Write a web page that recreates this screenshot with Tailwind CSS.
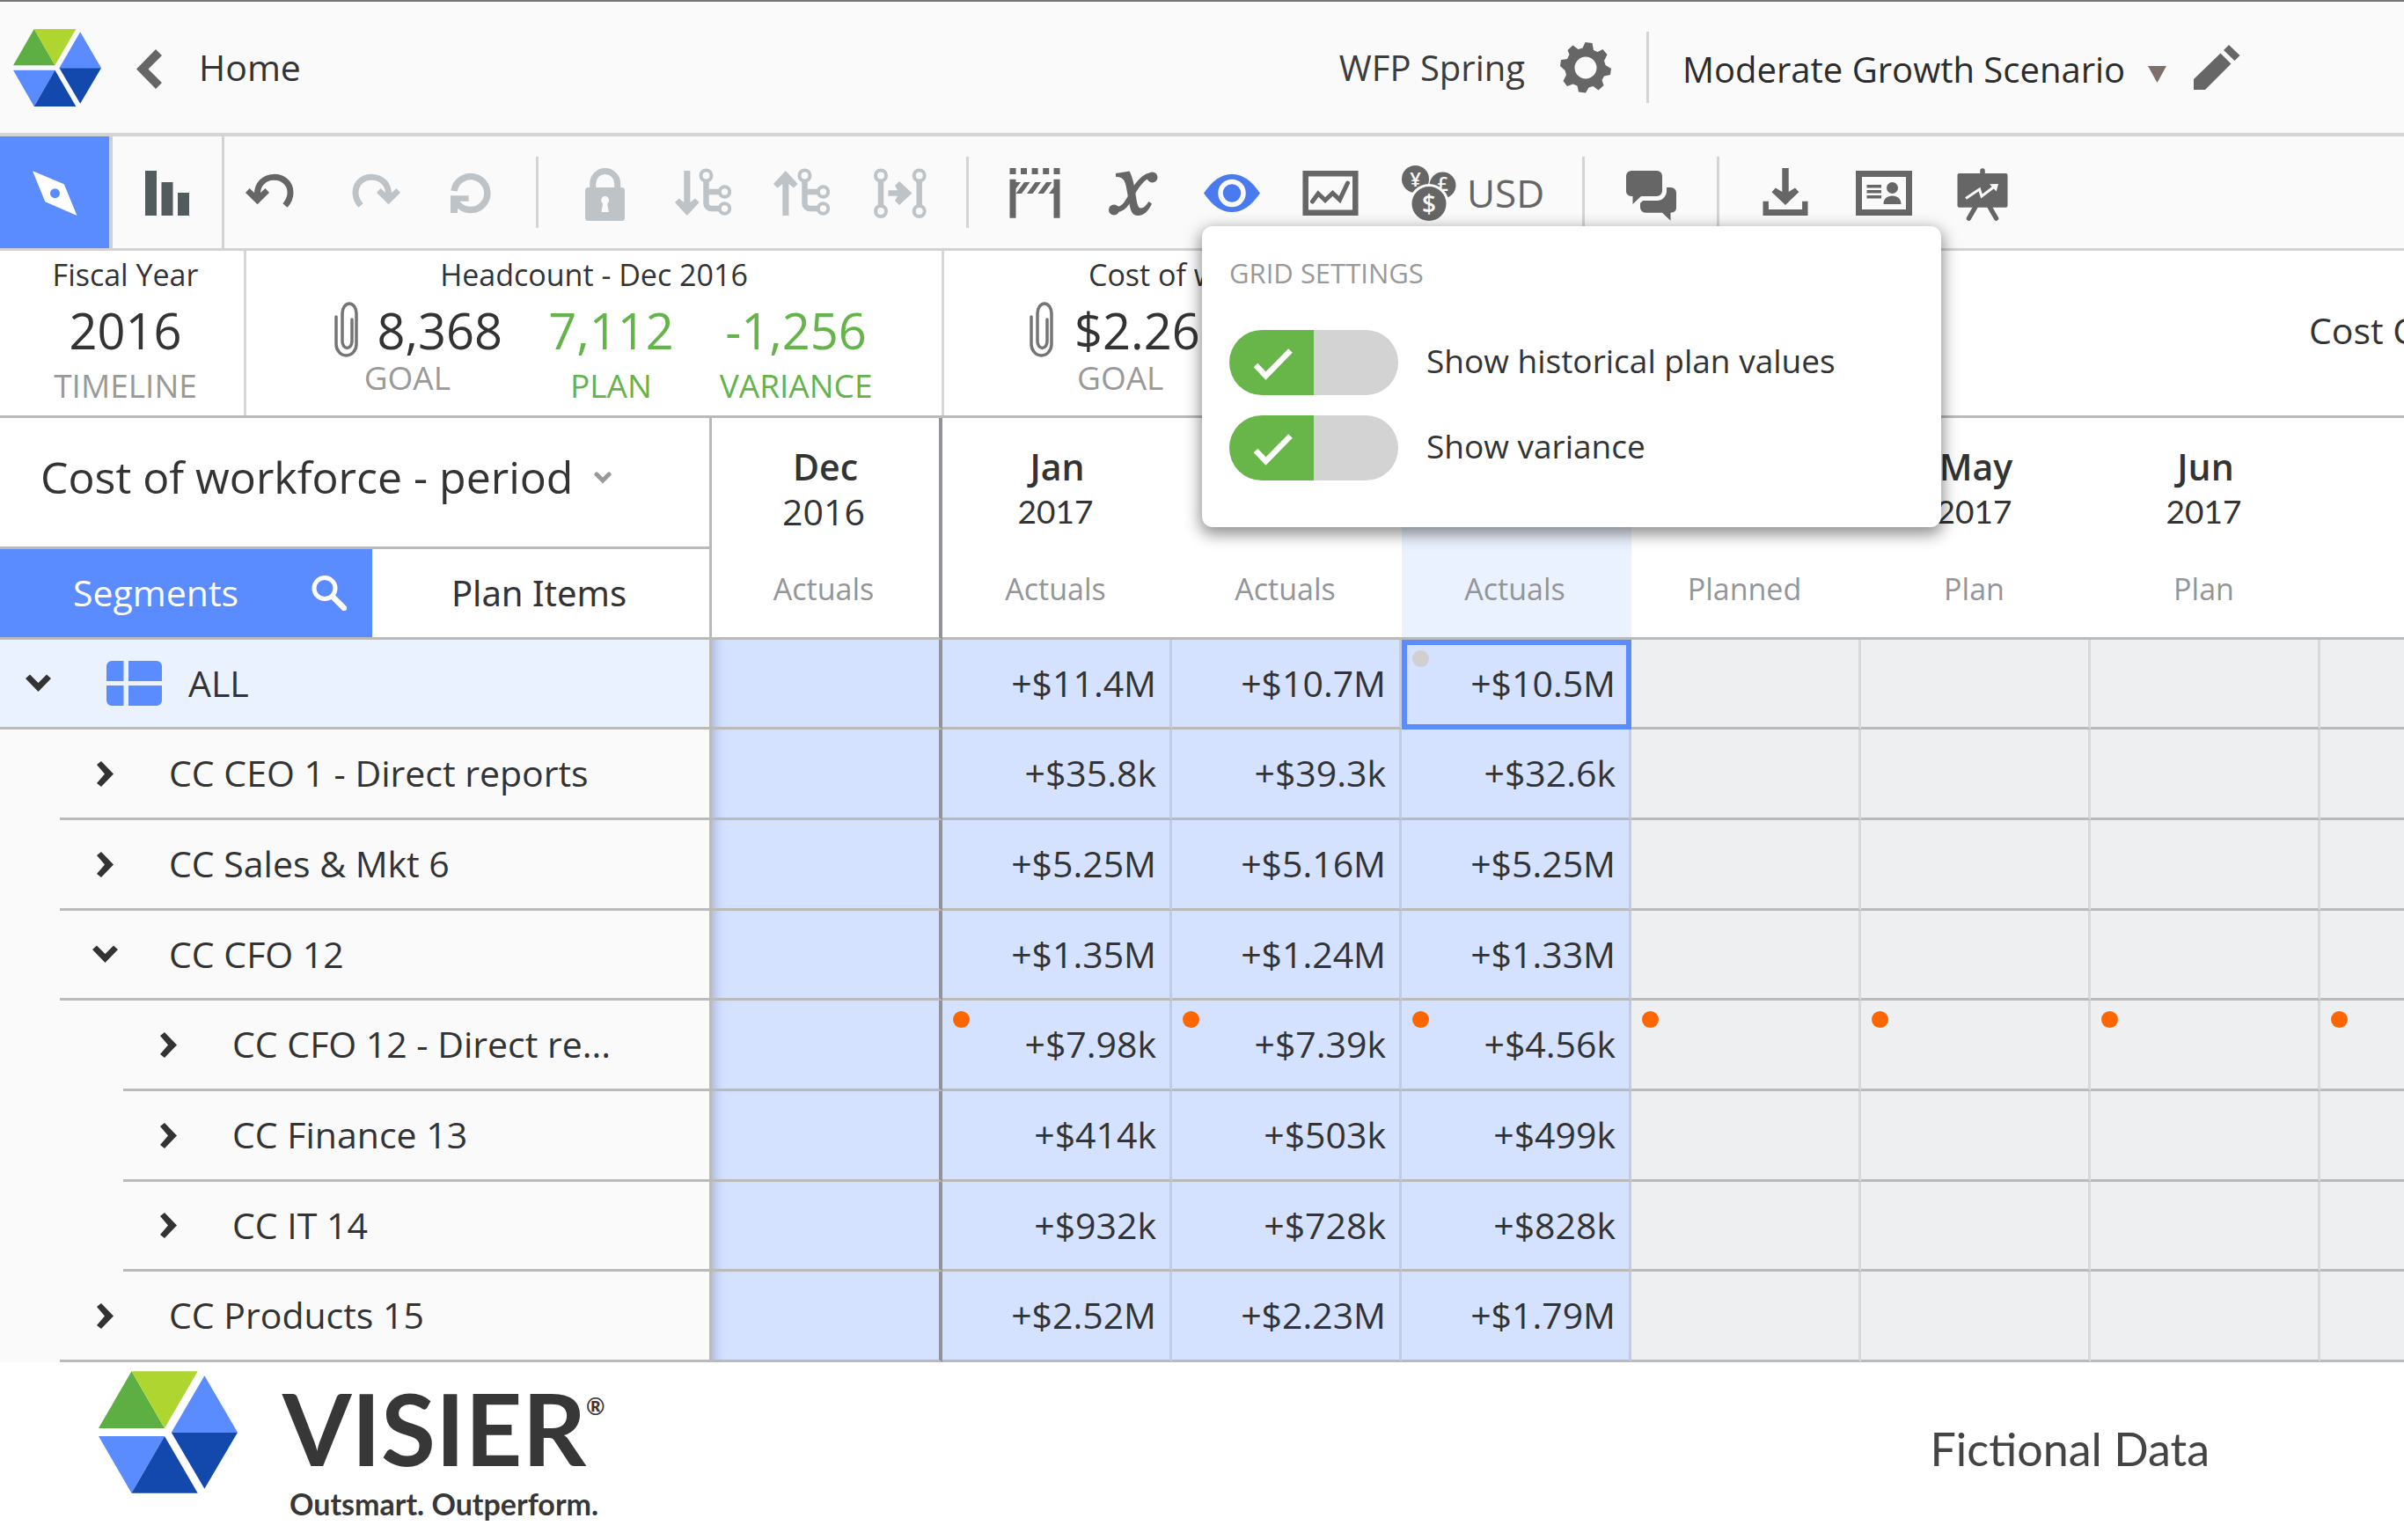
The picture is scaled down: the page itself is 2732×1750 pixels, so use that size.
<!DOCTYPE html>
<html lang="en">
<head>
<meta charset="utf-8">
<title>Moderate Growth Scenario</title>
<script src="https://cdn.jsdelivr.net/npm/@tailwindcss/browser@4"></script>
</head>
<body class="bg-white font-['Open_Sans',sans-serif] text-[41px] text-[#333] overflow-x-hidden">
<svg class="hidden">
  <symbol id="logo" viewBox="0 0 158.4 139">
    <path fill="#5dae43" d="M37.6 0L75.2 65H0z"/><path fill="#afd630" d="M37.6 0H113L75.2 65z"/>
    <path fill="#5b8cff" d="M120.7 5l37.7 64.7H83z"/><path fill="#1348ad" d="M83 69.7h75.4L120.7 134z"/>
    <path fill="#5b8cff" d="M0 74h75.2L37.6 139z"/><path fill="#1348ad" d="M75.2 74L113 139H37.6z"/>
  </symbol>
  <symbol id="right" viewBox="0 0 29 29"><path fill="#333" d="M5 4L10 0 24 14.5 10 29 5 25 14 14.5z"/></symbol>
  <symbol id="down" viewBox="0 0 29 29"><path fill="#333" d="M0 9L5 4.500 14.500 14 24 4.500 29 9 14.500 24z"/></symbol>
  <symbol id="clip" viewBox="0 0 30 64"><path fill="none" stroke="#757575" stroke-width="3.500" stroke-linecap="round" d="M3 17V48a11.500 13 0 0 0 23 0V13a8 11 0 0 0-16 0V45a5.500 7.500 0 0 0 11 0V20"/></symbol>
  <symbol id="tree" viewBox="0 0 64 64"><path fill="none" stroke="currentColor" stroke-width="6.500" d="M35.500 18V44a6 6 0 0 0 6 6H50M35.500 31H50"/><g fill="#fafafa" stroke="currentColor" stroke-width="4"><circle cx="35.500" cy="12.500" r="6"/><circle cx="56.500" cy="31" r="5.700"/><circle cx="56.500" cy="50" r="5.700"/></g></symbol>
</svg>

<header class="flex items-center h-[155px] bg-[#fafafa] border-t-2 border-t-[#777] border-b-4 border-b-[#d4d4d4] pl-[15px] pr-[186px]">
  <a href="#" aria-label="Visier"><svg class="w-[100px] h-[88px]"><use href="#logo"/></svg></a>
  <a href="#" class="flex items-center gap-[42px] ml-10">
    <svg class="w-[29px] h-[45px] mt-1" viewBox="0 0 29 45"><path fill="#666" d="M22 0l7 7-15.500 15.500L29 38l-7 7L0 22.500z"/></svg>
    <span>Home</span>
  </a>
  <div class="flex items-center ml-auto text-[40px]">
    <span class="text-[#3c3c3c]">WFP Spring</span>
    <button aria-label="Settings" class="ml-10"><svg class="w-[58px] h-[58px] block" viewBox="0 0 58 58"><path fill="#666" fill-rule="evenodd" d="M28.500 0l8 1 1.500 8 4.500 2 6-3 5 6-3.500 7 1.500 5 6.500 4-1 7-7 1.500-2.500 4.500 2 6-6 5.500-6-4.500-5 1.500-3.500 6-8-1-1.500-7-5-2-6.500 2.500-4.500-6L7 37l-1.500-5L0 27l1-7 7-1 2.500-5-2-5 6-5.500 6 4.500 5-1.500zM29 16.500a12.500 12.500 0 1 0 0 25 12.500 12.500 0 0 0 0-25z"/></svg></button>
    <div class="w-[3px] h-[81px] bg-[#d4d4d4] ml-10 mr-[38px]"></div>
    <select aria-label="Scenario" class="appearance-none mt-1 text-[#2c2c2c]"><option>Moderate Growth Scenario</option></select>
    <svg class="w-[21px] h-[19px] ml-[25px] mt-4" viewBox="0 0 21 19"><path fill="#7d706c" d="M0 0h21L10.500 19z"/></svg>
    <button aria-label="Edit scenario" class="ml-[31px]"><svg class="w-[53px] h-[51px] block" viewBox="0 0 53 51"><path fill="#666" d="M0 39L30.500 9.500 42.500 21.500 13 51H0zM34 6l6-6L52.500 12l-6 6z"/></svg></button>
  </div>
</header>

<nav class="flex items-center h-[130px] bg-[#fafafa] border-b-3 border-[#d2d2d2] text-[#666] [&_svg]:size-16 [&_svg]:shrink-0 [&_button]:h-[127px] [&_button]:flex [&_button]:items-center [&_button]:shrink-0">
  <button aria-label="Explore" class="w-32 justify-center bg-[#5b8cff] border-r-4 border-[#c9cfdf]"><svg viewBox="0 0 64 64"><path fill="#fff" fill-rule="evenodd" d="M7 7.300L42.800 22.300 57.500 58 21.300 42.300zM32.500 27.200a5.500 5.500 0 1 0 0 11 5.500 5.500 0 0 0 0-11z"/></svg></button>
  <button aria-label="Charts" class="w-[127px] justify-center border-r-3 border-[#d2d2d2]"><svg viewBox="0 0 64 64"><path fill="#525b5e" d="M7 7h13v51H7zM25.500 20h13v38h-13zM44 32h13v26H44z"/></svg></button>
  <button aria-label="Undo" class="w-28 justify-center"><svg viewBox="0 0 64 64"><path fill="none" stroke="#666" stroke-width="7" d="M13.500 35C12 8 51 8 51 32c0 6-2 10-6 14.500"/><path fill="#666" d="M0 32l4.500-5 5.500 5h7l5.500-5 4.500 5-13.500 13.300z"/></svg></button>
  <button aria-label="Redo" class="w-28 justify-center"><svg viewBox="0 0 64 64"><g transform="translate(64) scale(-1 1)"><path fill="none" stroke="#bdc3c7" stroke-width="7" d="M13.500 35C12 8 51 8 51 32c0 6-2 10-6 14.500"/><path fill="#bdc3c7" d="M0 32l4.500-5 5.500 5h7l5.500-5 4.500 5-13.500 13.300z"/></g></svg></button>
  <button aria-label="Reset" class="w-28 justify-center"><svg viewBox="0 0 64 64"><path fill="none" stroke="#bdc3c7" stroke-width="7.500" d="M13 30A19 19 0 1 1 17 44.500"/><path fill="#bdc3c7" d="M9 35.300h20.600v6.400H20l-3 5V55H9z"/></svg></button>
  <div class="w-[3px] h-[81px] bg-[#d4d4d4] ml-[18px] mr-[19px]"></div>
  <button aria-label="Lock" class="w-28 justify-center"><svg viewBox="0 0 64 64"><rect x="10" y="26" width="45" height="38" rx="3.500" fill="#bdc3c7"/><path fill="none" stroke="#bdc3c7" stroke-width="7" d="M18.700 28V21.500a14 14 0 0 1 28 0V28"/><path fill="#fafafa" d="M32.600 36a4.500 4.500 0 0 1 2.500 8.200l1.700 9.800h-8.400l1.700-9.800a4.500 4.500 0 0 1 2.500-8.200z"/></svg></button>
  <button aria-label="Push down" class="w-28 justify-center text-[#bdc3c7]"><svg viewBox="0 0 64 64"><use href="#tree"/><path fill="currentColor" d="M10.300 7h7.100v36l5.600-4.500 4.600 4.500L13.800 58 0 43l4.500-4.500 5.800 4.500z"/></svg></button>
  <button aria-label="Roll up" class="w-28 justify-center text-[#bdc3c7]"><svg viewBox="0 0 64 64"><use href="#tree"/><path fill="currentColor" d="M10.300 58h7.100V22l5.600 4.500 4.600-4.500L13.800 7 0 22l4.500 4.500 5.800-4.500z"/></svg></button>
  <button aria-label="Copy across" class="w-28 justify-center"><svg viewBox="0 0 64 64"><path stroke="#bdc3c7" stroke-width="6.500" d="M10 18v30M53.700 18v30"/><g fill="#fafafa" stroke="#bdc3c7" stroke-width="4"><circle cx="10" cy="12.500" r="6"/><circle cx="10" cy="53" r="6"/><circle cx="53.700" cy="12.500" r="6"/><circle cx="53.700" cy="53" r="6"/></g><path fill="#bdc3c7" d="M31 19l14.500 13.400L31 46l-5-5 3-5.300H18.400v-6.400H29L26 24z"/></svg></button>
  <div class="w-[3px] h-[81px] bg-[#d4d4d4] ml-[19px] mr-[19px]"></div>
  <button aria-label="Constraints" class="w-28 justify-center"><svg viewBox="0 0 64 64"><path fill="#666" d="M3.500 4h7v7h-7zM16 4h7v7h-7zM28.600 4h7v7h-7zM41.200 4h7v7h-7zM53.500 4h7v7h-7zM3.500 16.700h7v44h-7zM53.500 16.700h7v44h-7zM10 20h6l-6 8zM10.500 33L20 20h6.500L17 33zM23 33l9.500-13H39L29.500 33zM35.500 33L45 20h6.500L42 33zM48 33l6-8v8z"/></svg></button>
  <button aria-label="Formula" class="w-28 justify-center"><svg viewBox="0 0 64 64"><path fill="#666" d="M12 10l15.500-2.500c3.500 6.500 5.500 15 7 26 1.500 10 2.500 16 6 16 3.500 0 6-3 9-7.500l3.500 2.500C48.500 53.500 44 58 37 58c-6 0-8-5-9.500-13l-2.800-15C23 20 22 14 12 14z"/><path fill="none" stroke="#666" stroke-width="6" d="M55 13c-9-3-17 8-22 16-6 10-10 23-22 22"/><circle cx="53.500" cy="14.500" r="6" fill="#666"/><circle cx="10" cy="51.500" r="6" fill="#666"/></svg></button>
  <div class="relative">
    <button aria-label="Grid settings" aria-expanded="true" class="w-28 justify-center"><svg viewBox="0 0 64 64"><path fill="#4a7bee" d="M0 32.500C10 18 20 11 32 11s22 7 32 21.500C54 47 44 54 32 54S10 47 0 32.500z"/><circle cx="32" cy="32.500" r="13" fill="none" stroke="#fafafa" stroke-width="5.500"/></svg></button>
    <section class="absolute z-10 left-[22px] top-[102px] w-[840px] bg-white rounded-xl shadow-[0_6px_18px_2px_rgba(0,0,0,0.45)] pl-[31px] pt-[33px] pb-[53px] text-[37px] text-[#333]">
      <h2 class="text-[31px] leading-10 text-[#999]">GRID SETTINGS</h2>
      <label class="flex items-center gap-8 mt-[45px]">
        <span class="relative block w-[192px] h-[74px]"><input type="checkbox" checked class="appearance-none block w-full h-full rounded-full bg-[#d3d3d3] checked:bg-linear-to-r checked:from-[#68b64a] checked:from-50% checked:to-[#d3d3d3] checked:to-50%"><svg class="absolute left-4 top-[5px] pointer-events-none" viewBox="0 0 64 64"><path fill="none" stroke="#fff" stroke-width="6.500" d="M14 35l11.500 12L53.500 18.500"/></svg></span>
        <span class="pb-1">Show historical plan values</span>
      </label>
      <label class="flex items-center gap-8 mt-[23px]">
        <span class="relative block w-[192px] h-[74px]"><input type="checkbox" checked class="appearance-none block w-full h-full rounded-full bg-[#d3d3d3] checked:bg-linear-to-r checked:from-[#68b64a] checked:from-50% checked:to-[#d3d3d3] checked:to-50%"><svg class="absolute left-4 top-[5px] pointer-events-none" viewBox="0 0 64 64"><path fill="none" stroke="#fff" stroke-width="6.500" d="M14 35l11.500 12L53.500 18.500"/></svg></span>
        <span class="pb-1">Show variance</span>
      </label>
    </section>
  </div>
  <button aria-label="Chart view" class="w-28 justify-center"><svg viewBox="0 0 64 64"><g fill="none" stroke="#666"><path stroke-width="6.500" d="M3.700 10.300h56.600v44.400H3.700z"/><path stroke-width="5" stroke-linejoin="miter" d="M11.500 42L18 33l8 7.500 8.500-8 8 7.500 9-19" stroke-linecap="round"/></g></svg></button>
  <button aria-label="Currency" class="w-[212px] pl-6 gap-[11px] text-[44px]"><svg viewBox="0 0 64 64" font-family="Open Sans" font-weight="600" text-anchor="middle"><circle cx="16.500" cy="16.500" r="15.500" fill="#666"/><text x="16.500" y="24.500" font-size="22" fill="#fafafa">¥</text><circle cx="47.500" cy="23.500" r="15" fill="#666"/><text x="47.500" y="30" font-size="22" fill="#fafafa">£</text><circle cx="32" cy="44.500" r="21" fill="#666" stroke="#fafafa" stroke-width="3"/><text x="32" y="54.500" font-size="28" fill="#fafafa">$</text></svg><span>USD</span></button>
  <div class="w-[3px] h-[81px] bg-[#d4d4d4] ml-[18px] mr-[19px]"></div>
  <button aria-label="Comments" class="w-28 justify-center"><svg viewBox="0 0 64 64"><path fill="#666" d="M26 26h29a6 6 0 0 1 6 6v17c0 4-3 5.700-6.500 5.700v9L45 54.700H26a6 6 0 0 1-6-6V32a6 6 0 0 1 6-6z"/><path fill="#666" stroke="#fafafa" stroke-width="10" paint-order="stroke" d="M10 7h29a6 6 0 0 1 6 6v17a6 6 0 0 1-6 6H21l-9.500 9v-9C7 36 4 34 4 30V13a6 6 0 0 1 6-6z"/></svg></button>
  <div class="w-[3px] h-[81px] bg-[#d4d4d4] ml-[19px] mr-[19px]"></div>
  <button aria-label="Download" class="w-28 justify-center"><svg viewBox="0 0 64 64"><path fill="#666" d="M28.300 4h7.400v27l7.300-4.500 4.300 4.800L32 46 16.500 31.300l4.300-4.800 7.500 4.500zM6.500 41.700h6.400V51h38.200v-9.300h6.400V58h-51z"/></svg></button>
  <button aria-label="Report" class="w-28 justify-center"><svg viewBox="0 0 64 64"><path fill="none" stroke="#666" stroke-width="7" d="M3.500 10.500h57v44h-57z"/><path fill="#666" d="M12.500 23H29v3.500H12.500zM12.500 29H29v3.500H12.500zM12.500 35H29v3.500H12.500zM31.500 45c0-6 4-9.500 10-9.500s10 3.500 10 9.500z"/><circle cx="41.500" cy="26.500" r="6.500" fill="#666"/></svg></button>
  <button aria-label="Present" class="w-28 justify-center"><svg viewBox="0 0 64 64"><rect x="3.500" y="10" width="57" height="38.700" rx="2" fill="#666"/><path stroke="#666" stroke-width="5.500" stroke-linecap="round" d="M32 7v6M24 48l-7.500 13M40 48l7.500 13"/><path fill="none" stroke="#fafafa" stroke-width="3" d="M13 38.500L28.500 28l2.500 8 14.500-11"/><path fill="#fafafa" d="M40 22.300L50 22l-2.300 8.500z"/></svg></button>
</nav>

<section class="flex h-[190px] border-b-3 border-[#bababa] whitespace-nowrap overflow-hidden">
  <div class="w-[280px] shrink-0 pl-2 border-r-3 border-[#d6d6d6] text-center">
    <p class="text-[34px] leading-[54px]">Fiscal Year</p>
    <p class="text-[56px] leading-[72px]">2016</p>
    <p class="text-[37px] leading-[54px] text-[#999]">TIMELINE</p>
  </div>
  <div class="w-[793px] shrink-0 border-r-3 border-[#d6d6d6] text-center">
    <p class="text-[34px] leading-[54px]">Headcount - Dec 2016</p>
    <div class="flex justify-center gap-[52px] pl-5 text-[#64b34b]">
      <div>
        <p class="flex items-center gap-5 text-[56px] leading-[72px] text-[#333]"><svg class="w-[30px] h-16"><use href="#clip"/></svg>8,368</p>
        <p class="pr-6 text-[37px] leading-9 text-[#999]">GOAL</p>
      </div>
      <div>
        <p class="text-[56px] leading-[72px]">7,112</p>
        <p class="text-[37px] leading-[54px]">PLAN</p>
      </div>
      <div>
        <p class="text-[56px] leading-[72px]">-1,256</p>
        <p class="text-[37px] leading-[54px]">VARIANCE</p>
      </div>
    </div>
  </div>
  <div class="pl-24">
    <p class="text-[34px] leading-[54px] pl-[68px]">Cost of workforce</p>
    <p class="flex items-center gap-[22px] text-[56px] leading-[72px]"><svg class="w-[30px] h-16"><use href="#clip"/></svg>$2.26</p>
    <p class="pl-[55px] text-[37px] leading-9 text-[#999]">GOAL</p>
  </div>
  <div class="ml-auto w-[108px] shrink-0 pt-[54px] leading-[72px]">Cost Center</div>
</section>

<main class="overflow-hidden">
<table class="table-fixed w-max min-w-full border-separate border-spacing-0 text-right [&_tbody_td]:relative [&_tbody_td]:p-0 [&_tbody_td]:pr-[15px] [&_tbody_td]:border-r-3 [&_tbody_td]:border-b-3 [&_tbody_td]:border-r-[#d8d9da] [&_tbody_td]:border-b-[#bababa] [&_tbody_td]:bg-[#eeeff1] [&_td.a]:bg-[#d4e1ff]! [&_td.a]:border-r-[#bfcce8]! [&_td.d]:border-r-4! [&_td.d]:border-r-[#919399]! [&_td.d]:shadow-[inset_14px_0_12px_-10px_#aab8de] [&_tbody_th]:p-0 [&_tbody_th]:font-normal [&_tbody_th]:text-left [&_tbody_th]:border-r-3 [&_tbody_th]:border-[#bababa] [&_tbody_th]:bg-[#fafafa]">
  <colgroup><col class="w-[809px]"><col class="w-[262px]"><col class="w-[261px]"><col class="w-[261px]"><col class="w-[261px]"><col class="w-[261px]"><col class="w-[261px]"><col class="w-[261px]"><col class="w-[261px]"></colgroup>
  <thead>
    <tr class="[&>th]:p-0 [&>th]:align-top [&>th]:border-b-3 [&>th]:border-b-[#bababa] text-center [&_b]:block [&_b]:pt-7 [&_b]:h-[82px] [&_b]:leading-[54px] [&_b]:font-semibold [&_i]:block [&_i]:pr-1 [&_i]:not-italic [&_i]:font-normal [&_i]:h-[89px] [&_i]:leading-12 [&_small]:block [&_small]:pr-1 [&_small]:font-normal [&_small]:text-[34px] [&_small]:leading-[46px] [&_small]:text-[#939598]">
      <th class="border-r-3 border-r-[#bababa] font-normal!">
        <div class="flex items-center h-[149px] border-b-3 border-[#bababa] pl-[46px] pb-[11px]">
          <select aria-label="Measure" class="appearance-none text-[50px]"><option>Cost of workforce - period</option></select>
          <svg class="w-5 h-3.5 ml-[23px]" viewBox="0 0 20 14"><path fill="none" stroke="#999" stroke-width="5" stroke-linecap="round" d="M3 3l7 7 7-7"/></svg>
        </div>
        <div class="flex h-[100px]">
          <button class="flex items-center w-[423px] bg-[#5b8cff] text-white pl-[83px] pr-[29px]">Segments
            <svg class="w-10 h-10 ml-auto" viewBox="0 0 40 40"><g fill="none" stroke="#fff" stroke-linecap="round"><circle cx="15" cy="14.500" r="12" stroke-width="5"/><path stroke-width="6.500" d="M25 25l12 12"/></g></svg></button>
          <button class="flex-1 pr-1 font-['Noto_Sans',sans-serif] text-[40px]">Plan Items</button>
        </div>
      </th>
      <th class="border-r-4 border-r-[#919399]"><b>Dec</b><i>2016</i><small>Actuals</small></th>
      <th><b>Jan</b><i class="font-['Lato'] text-[37px]">2017</i><small>Actuals</small></th>
      <th><b>Feb</b><i class="font-['Lato'] text-[37px]">2017</i><small>Actuals</small></th>
      <th class="bg-[#ebf2ff]"><b>Mar</b><i class="font-['Lato'] text-[37px]">2017</i><small>Actuals</small></th>
      <th><b>Apr</b><i class="font-['Lato'] text-[37px]">2017</i><small>Planned</small></th>
      <th><b>May</b><i class="font-['Lato'] text-[37px]">2017</i><small>Plan</small></th>
      <th><b>Jun</b><i class="font-['Lato'] text-[37px]">2017</i><small>Plan</small></th>
      <th></th>
    </tr>
  </thead>
  <tbody>
    <tr>
      <th class="bg-[#ebf2ff]!"><div class="flex items-center h-[102px] border-b-3 border-[#bababa] pl-[29px]"><button aria-label="Collapse"><svg class="block size-[29px]"><use href="#down"/></svg></button><svg class="w-[63px] h-[51px] ml-[63px] mr-[30px]" viewBox="0 0 63 51"><path fill="#5b8cff" d="M6 0h13.500v23H0V6a6 6 0 0 1 6-6zM25 0h32a6 6 0 0 1 6 6v17H25zM0 28h19.500v23H6a6 6 0 0 1-6-6zM25 28h38v17a6 6 0 0 1-6 6H25z"/></svg>ALL</div></th>
      <td class="a d"></td><td class="a">+$11.4M</td><td class="a">+$10.7M</td>
      <td class="a">+$10.5M<span class="absolute left-0 top-0 -right-[3px] -bottom-[3px] border-6 border-[#5b8cff]"></span><span class="absolute left-3 top-3 size-[19px] rounded-full bg-[#d0d0d0]"></span></td>
      <td></td><td></td><td></td><td></td>
    </tr>
    <tr>
      <th><div class="flex items-center gap-[58px] h-[103px] border-b-3 border-[#bababa] ml-[68px] pl-[37px]"><button aria-label="Expand"><svg class="block size-[29px]"><use href="#right"/></svg></button>CC CEO 1 - Direct reports</div></th>
      <td class="a d"></td><td class="a">+$35.8k</td><td class="a">+$39.3k</td><td class="a">+$32.6k</td><td></td><td></td><td></td><td></td>
    </tr>
    <tr>
      <th><div class="flex items-center gap-[58px] h-[103px] border-b-3 border-[#bababa] ml-[68px] pl-[37px]"><button aria-label="Expand"><svg class="block size-[29px]"><use href="#right"/></svg></button>CC Sales &amp; Mkt 6</div></th>
      <td class="a d"></td><td class="a">+$5.25M</td><td class="a">+$5.16M</td><td class="a">+$5.25M</td><td></td><td></td><td></td><td></td>
    </tr>
    <tr>
      <th><div class="flex items-center gap-[58px] h-[102px] border-b-3 border-[#bababa] ml-[68px] pl-[37px]"><button aria-label="Collapse"><svg class="block size-[29px]"><use href="#down"/></svg></button>CC CFO 12</div></th>
      <td class="a d"></td><td class="a">+$1.35M</td><td class="a">+$1.24M</td><td class="a">+$1.33M</td><td></td><td></td><td></td><td></td>
    </tr>
    <tr class="[&_span]:absolute [&_span]:left-3 [&_span]:top-3 [&_span]:size-[19px] [&_span]:rounded-full [&_span]:bg-[#ff6600]">
      <th><div class="flex items-center gap-[58px] h-[103px] border-b-3 border-[#bababa] ml-[140px] pl-[37px]"><button aria-label="Expand"><svg class="block size-[29px]"><use href="#right"/></svg></button>CC CFO 12 - Direct re...</div></th>
      <td class="a d"></td><td class="a"><span></span>+$7.98k</td><td class="a"><span></span>+$7.39k</td><td class="a"><span></span>+$4.56k</td><td><span></span></td><td><span></span></td><td><span></span></td><td><span></span></td>
    </tr>
    <tr>
      <th><div class="flex items-center gap-[58px] h-[103px] border-b-3 border-[#bababa] ml-[140px] pl-[37px]"><button aria-label="Expand"><svg class="block size-[29px]"><use href="#right"/></svg></button>CC Finance 13</div></th>
      <td class="a d"></td><td class="a">+$414k</td><td class="a">+$503k</td><td class="a">+$499k</td><td></td><td></td><td></td><td></td>
    </tr>
    <tr>
      <th><div class="flex items-center gap-[58px] h-[102px] border-b-3 border-[#bababa] ml-[140px] pl-[37px]"><button aria-label="Expand"><svg class="block size-[29px]"><use href="#right"/></svg></button>CC IT 14</div></th>
      <td class="a d"></td><td class="a">+$932k</td><td class="a">+$728k</td><td class="a">+$828k</td><td></td><td></td><td></td><td></td>
    </tr>
    <tr>
      <th><div class="flex items-center gap-[58px] h-[103px] border-b-3 border-[#bababa] ml-[68px] pl-[37px]"><button aria-label="Expand"><svg class="block size-[29px]"><use href="#right"/></svg></button>CC Products 15</div></th>
      <td class="a d"></td><td class="a">+$2.52M</td><td class="a">+$2.23M</td><td class="a">+$1.79M</td><td></td><td></td><td></td><td></td>
    </tr>
  </tbody>
</table>
</main>

<footer class="flex items-start pl-28 pr-[221px] pt-[10px] font-['Lato',sans-serif] text-[#373737]">
  <svg class="w-[158px] h-[139px]"><use href="#logo"/></svg>
  <div class="ml-[51px] pt-2">
    <p class="flex items-start text-[113px] leading-28 font-bold">VISIER<sup class="top-0 text-[26px] leading-8 pt-4">®</sup></p>
    <p class="pl-2 mt-1.5 text-[34px] leading-[50px] font-bold">Outsmart. Outperform.</p>
  </div>
  <p class="ml-auto pt-[58px] text-[52px] leading-[60px] text-[#444]">Fictional Data</p>
</footer>
</body>
</html>
